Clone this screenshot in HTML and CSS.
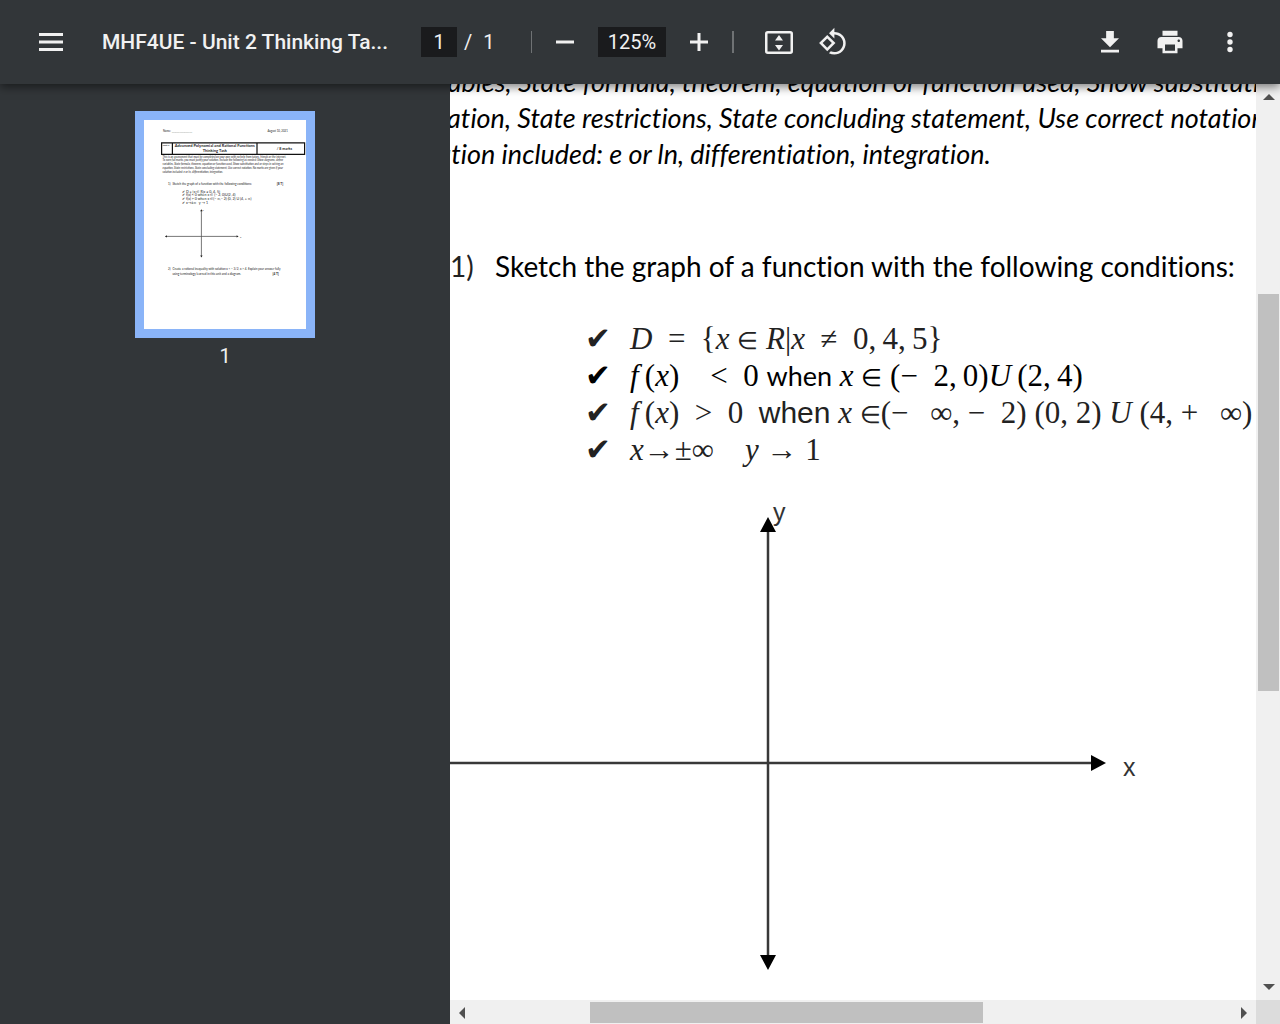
FILE: index.html
```html
<!DOCTYPE html>
<html lang="en">
<head>
<meta charset="utf-8">
<title>MHF4UE - Unit 2 Thinking Task</title>
<link rel="stylesheet" href="styles.css">
</head>
<body>
<header class="toolbar">
  <button class="tool" aria-label="Menu">
    <svg width="24" height="18" viewBox="0 0 24 18"><path d="M0 0h24v3H0zM0 7.500h24v3H0zM0 15h24v3H0z"/></svg>
  </button>
  <h1 class="doc-title">MHF4UE - Unit 2 Thinking Ta...</h1>
  <div class="center-tools">
    <div class="page-selector">
      <input class="field page-field" type="text" value="1" aria-label="Page number">
      <span>/</span>
      <span class="page-total">1</span>
    </div>
    <span class="divider"></span>
    <button class="tool small" aria-label="Zoom out">
      <svg width="18" height="18" viewBox="0 0 18 18"><path d="M0 7.500h18v3H0z"/></svg>
    </button>
    <input class="field zoom-field" type="text" value="125%" aria-label="Zoom level">
    <button class="tool small" aria-label="Zoom in">
      <svg width="18" height="18" viewBox="0 0 18 18"><path d="M0 7.500h7.500V0h3v7.500H18v3h-7.500V18h-3v-7.500H0z"/></svg>
    </button>
    <span class="divider thick"></span>
    <div class="view-tools">
      <button class="tool" aria-label="Fit to page">
        <svg width="28" height="24" viewBox="0 0 28 24"><rect x="1.250" y="2.250" width="25.500" height="20.500" rx="1.500" fill="none" stroke="#f1f1f1" stroke-width="2.500"/><path d="M14 5l4 5.500h-8zM14 20.500l4-5.500h-8z"/></svg>
      </button>
      <button class="tool" aria-label="Rotate counterclockwise">
        <svg width="36" height="36" viewBox="0 0 24 24"><path d="M7.340 6.410L.860 12.900l6.490 6.480 6.490-6.480-6.500-6.490zM3.690 12.900l3.660-3.660L11 12.900l-3.660 3.660-3.650-3.660zm15.670-6.260C17.610 4.880 15.300 4 13 4V.760L8.760 5 13 9.240V6c1.790 0 3.580.680 4.950 2.050 2.730 2.730 2.730 7.170 0 9.900C16.580 19.320 14.790 20 13 20c-.970 0-1.940-.210-2.840-.610l-1.490 1.490C10.020 21.620 11.510 22 13 22c2.300 0 4.610-.880 6.360-2.640 3.520-3.510 3.520-9.210 0-12.720z" transform="translate(2 1.900) scale(.84)"/></svg>
      </button>
    </div>
  </div>
  <div class="end-tools">
    <button class="tool" aria-label="Download">
      <svg width="30" height="30" viewBox="0 0 20 20"><path d="M16 7.330h-3.430V2.500H7.430v4.830H4L10 13.300zM4 15v1.800h12V15z" transform="translate(0 .2)"/></svg>
    </button>
    <button class="tool" aria-label="Print">
      <svg width="30" height="30" viewBox="0 0 24 24"><path d="M19 8H5c-1.660 0-3 1.340-3 3v6h4v4h12v-4h4v-6c0-1.660-1.340-3-3-3zm-3 11H8v-5h8v5zm3-7c-.550 0-1-.450-1-1s.450-1 1-1 1 .450 1 1-.450 1-1 1zm-1-9H6v4h12V3z"/></svg>
    </button>
    <button class="tool" aria-label="More actions">
      <svg width="6" height="22" viewBox="0 0 6 22"><circle cx="3" cy="3.500" r="2.700"/><circle cx="3" cy="11" r="2.700"/><circle cx="3" cy="18.500" r="2.700"/></svg>
    </button>
  </div>
</header>
<div class="workspace">
  <aside class="sidebar">
    <a class="thumbnail" href="#page" aria-label="Page 1">
      <svg class="thumbnail-page" viewBox="0 0 810 1045">
        <text x="95" y="60" font-size="14">Name: ________________</text>
        <text x="617" y="60" font-size="14">August 10, 2021</text>
        <path d="M88 114H803V172H88zM142 114V172M565 114V172" fill="none" stroke="#111" stroke-width="6"/>
        <g font-weight="bold">
          <text x="94" y="130" font-size="12">Unit 2</text>
          <text x="354" y="135" font-size="20" text-anchor="middle">Advanced Polynomial and Rational Functions</text>
          <text x="354" y="160" font-size="20" text-anchor="middle">Thinking Task</text>
          <text x="664" y="152" font-size="18">/ 8 marks</text>
          <text x="664" y="326" font-size="16">[8 T]</text>
          <text x="642" y="776" font-size="16">[4 T]</text>
        </g>
        <g font-size="14" font-style="italic">
          <text x="93" y="189">This is an assessment that must be completed on your own with no help from tutors, friends or the internet.</text>
          <text x="93" y="207">To earn full marks, you must justify your solution. Include the following as needed: Show diagrams, define</text>
          <text x="93" y="226">variables, State formula, theorem, equation or function used, Show substitution and or steps in solving an</text>
          <text x="93" y="245">equation, State restrictions, State concluding statement, Use correct notation. No marks are given if your</text>
          <text x="93" y="264">solution included: e or ln, differentiation, integration.</text>
        </g>
        <g font-size="15">
          <text x="120" y="326">1)</text>
          <text x="142" y="326">Sketch the graph of a function with the following conditions:</text>
          <text x="120" y="751">2)</text>
          <text x="142" y="751">Create a rational inequality with solution x &lt; − 3/2, x &gt; 4. Explain your answer fully</text>
          <text x="142" y="776">using terminology learned in this unit and a diagram.</text>
        </g>
        <g font-size="18">
          <text x="190" y="363">✔ D = {x ∈ R|x ≠ 0, 4, 5}</text>
          <text x="190" y="382">✔ f(x) &lt; 0 when x ∈ (− 2, 0)U(2, 4)</text>
          <text x="190" y="401">✔ f(x) &gt; 0 when x ∈(− ∞,− 2) (0, 2) U (4, + ∞)</text>
          <text x="190" y="420">✔ x→±∞ &#160; y → 1</text>
        </g>
        <path d="M287 450V680M107 582H467" stroke="#555" stroke-width="4"/>
        <path d="M287 446l6 10h-12zM287 688l6-10h-12zM105 582l10-6v12zM473 582l-10-6v12z"/>
        <text x="293" y="456" font-size="13">y</text>
        <text x="480" y="588" font-size="13">x</text>
      </svg>
    </a>
    <div class="thumbnail-label">1</div>
  </aside>
  <div class="viewer">
    <main class="page" id="page">
      <p class="instructions">variables, State formula, theorem, equation or function used, Show substitution and<br>equation, State restrictions, State concluding statement, Use correct notation.<br>solution included: e or ln, differentiation, integration.</p>
      <p class="question"><span class="number">1)</span>Sketch the graph of a function with the following conditions:</p>
      <ul class="conditions">
        <li><i>D</i>&ensp;=&ensp;{<i>x</i>&emsp14;<span class="sign">∈</span>&emsp14;<i>R</i>|<i>x</i>&ensp;≠&ensp;0,&thinsp;4,&thinsp;5}</li>
        <li class="strong"><i>f</i>&thinsp;(<i>x</i>)&ensp;&ensp;&lt;&ensp;0 <span class="word">when</span> <i>x</i> <span class="sign">∈</span> (−&ensp;2,&thinsp;0)<i>U</i>&thinsp;(2,&thinsp;4)</li>
        <li><i>f</i>&thinsp;(<i>x</i>)&ensp;&gt;&ensp;0&ensp;<span class="word-plain">when</span> <i>x</i> <span class="sign">∈</span>(−&ensp;&thinsp;∞, −&ensp;2) (0, 2) <i>U</i> (4, +&ensp;&thinsp;∞)</li>
        <li><i>x</i>→±∞&emsp;<i>y</i> → 1</li>
      </ul>
      <svg class="axes" width="760" height="490" viewBox="0 0 760 490">
        <path d="M356 38V468M0 273H684" stroke="#383838" stroke-width="2.500"/>
        <path d="M356 27l8 15h-16zM356 480l8-15h-16zM694 273l-15-8v16z" stroke="none"/>
        <text x="361" y="31">y</text>
        <text x="711" y="286">x</text>
      </svg>
    </main>
    <div class="scrollbar vertical">
      <span class="arrow"><svg width="12" height="6" viewBox="0 0 12 6"><path d="M6 0l6 6H0z"/></svg></span>
      <span class="before"></span><span class="thumb"></span><span class="after"></span>
      <span class="arrow"><svg width="12" height="6" viewBox="0 0 12 6"><path d="M6 6l6-6H0z"/></svg></span>
    </div>
    <div class="scrollbar horizontal">
      <span class="arrow"><svg width="6" height="12" viewBox="0 0 6 12"><path d="M0 6l6-6v12z"/></svg></span>
      <span class="before"></span><span class="thumb"></span><span class="after"></span>
      <span class="arrow"><svg width="6" height="12" viewBox="0 0 6 12"><path d="M6 6L0 0v12z"/></svg></span>
    </div>
    <div class="corner"></div>
  </div>
</div>
</body>
</html>
```
FILE: styles.css
```css
* { box-sizing: border-box; }
body {
  margin: 0;
  height: 100vh;
  display: flex;
  flex-direction: column;
  overflow: hidden;
  background: #323639;
  color: #f1f1f1;
  font-family: Roboto, sans-serif;
}
.toolbar {
  position: relative;
  z-index: 1;
  flex: none;
  display: flex;
  align-items: center;
  height: 84px;
  padding: 0 26px 0 27px;
  background: #323639;
  box-shadow: 0 3px 9px rgba(0, 0, 0, .5);
  font-size: 20px;
}
.tool {
  flex: none;
  display: flex;
  align-items: center;
  justify-content: center;
  width: 48px;
  height: 48px;
  padding: 0;
  border: 0;
  background: none;
  fill: #f1f1f1;
}
.tool.small { width: 36px; }
.doc-title {
  flex: 0 1 290px;
  margin: 0 29px 0 27px;
  overflow: hidden;
  white-space: nowrap;
  font-size: 21px;
  font-weight: 500;
}
.center-tools { display: flex; align-items: center; gap: 15px; }
.page-selector { display: flex; align-items: center; gap: 7px; width: 95px; }
.page-total { margin-left: 4px; }
.field {
  height: 30px;
  padding: 0;
  border: 0;
  background: #1a1b1d;
  color: #f1f1f1;
  font: 20px Roboto, sans-serif;
  text-align: center;
}
.page-field { width: 36px; }
.zoom-field { width: 68px; }
.divider { width: 1px; height: 22px; background: #6f7274; }
.divider.thick { width: 2px; }
.view-tools { display: flex; gap: 6px; margin-left: 6px; }
.end-tools { display: flex; gap: 12px; margin-left: auto; }

.workspace { flex: 1; min-height: 0; display: flex; }
.sidebar {
  flex: none;
  width: 450px;
  display: flex;
  flex-direction: column;
  align-items: center;
  padding-top: 27px;
}
.thumbnail { display: block; width: 180px; border: 9px solid #8ab4f8; background: #fff; }
.thumbnail-page { display: block; width: 100%; fill: #222; font-family: Lato, "DejaVu Sans", sans-serif; }
.thumbnail-label { margin-top: 6px; font-size: 20px; line-height: 24px; }

.viewer {
  flex: 1;
  min-width: 0;
  display: grid;
  grid-template: minmax(0, 1fr) 24px / minmax(0, 1fr) 24px;
}
.page {
  overflow: hidden;
  background: #fff;
  color: #000;
  font-family: Lato, sans-serif;
  font-size: 27px;
  font-variant-ligatures: none;
  line-height: 37px;
  white-space: nowrap;
}
.page p { margin: 0; }
.page .instructions { margin: -20px 0 0 -44px; font-style: italic; line-height: 36px; }
.page .question { margin-top: 76px; font-size: 28px; }
.number { display: inline-block; width: 45px; color: #222; }
.conditions {
  margin: 35px 0 0 180px;
  padding: 0;
  list-style: none;
  color: #222;
  font-family: "Liberation Serif", serif;
  font-size: 31px;
}
.conditions li { height: 37px; }
.conditions li::before {
  content: "✔";
  display: inline-block;
  width: 45px;
  margin-left: -45px;
  font-family: "DejaVu Sans", sans-serif;
}
.conditions .strong { color: #000; }
.sign { font-size: 24px; }
.word { font-family: Lato, sans-serif; font-size: 27px; }
.word-plain { font-family: "Liberation Sans", sans-serif; font-size: 30px; }
.axes { display: block; margin: 22px 0 0 -38px; font: 25px "Liberation Sans", sans-serif; }
.axes text { fill: #333; }

.scrollbar { display: flex; background: #f0f0f0; }
.vertical { flex-direction: column; padding: 0 1px 0 2px; }
.horizontal { padding: 2px 0 1px; }
.arrow { flex: 0 0 24px; display: flex; align-items: center; justify-content: center; fill: #505050; }
.vertical .arrow { flex-basis: 26px; }
.thumb { background: #c0c0c0; }
.vertical .before { flex: 184; }
.vertical .thumb { flex: 397; }
.vertical .after { flex: 283; }
.horizontal .before { flex: 116; }
.horizontal .thumb { flex: 393; }
.horizontal .after { flex: 249; }
.corner { background: #dcdcdc; }
```
